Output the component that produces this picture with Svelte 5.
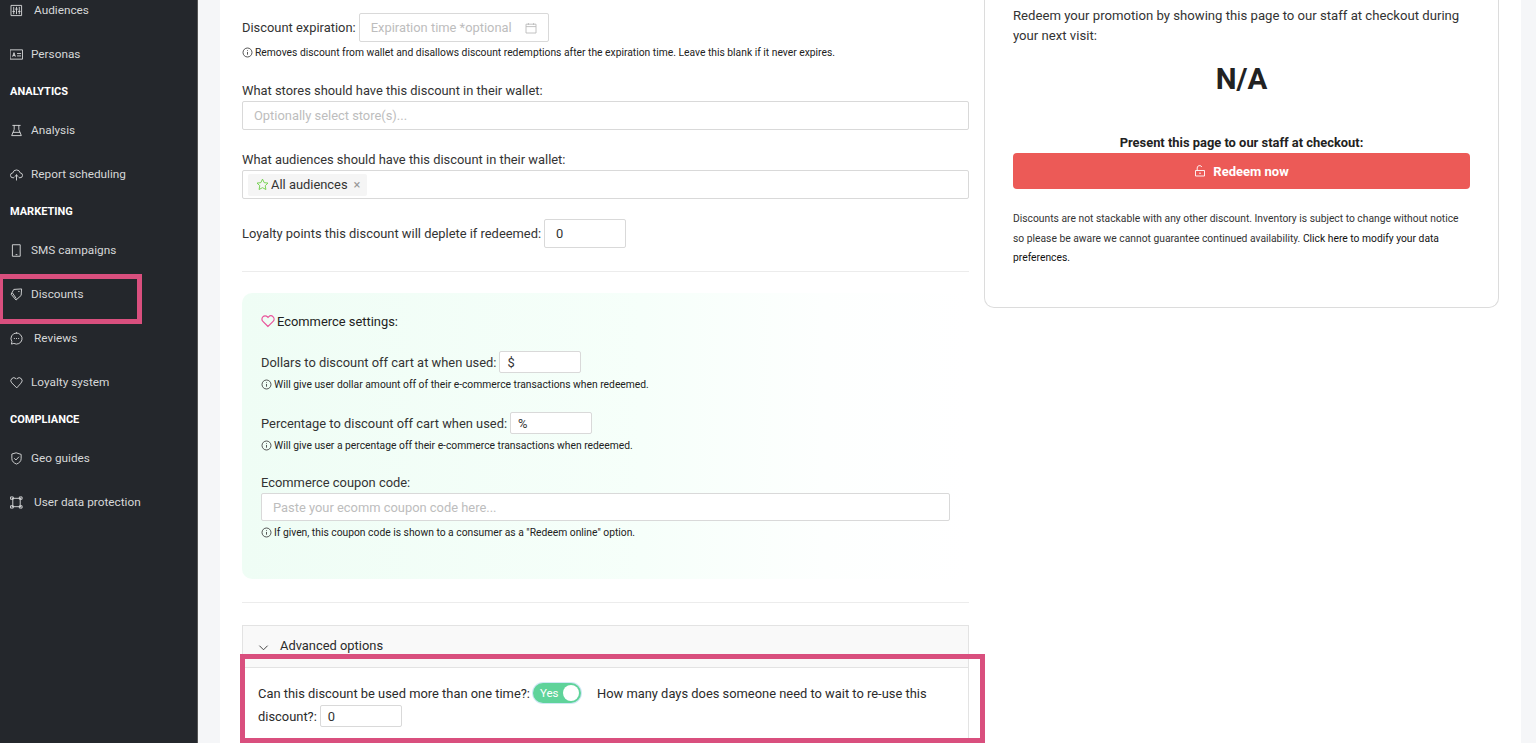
<script>
	const nav = [
		{ icon: 'sliders', label: 'Audiences', wide: true },
		{ icon: 'card', label: 'Personas' },
		{ head: 'ANALYTICS' },
		{ icon: 'flask', label: 'Analysis' },
		{ icon: 'cloud', label: 'Report scheduling' },
		{ head: 'MARKETING' },
		{ icon: 'phone', label: 'SMS campaigns' },
		{ icon: 'tag', label: 'Discounts' },
		{ icon: 'chat', label: 'Reviews', wide: true },
		{ icon: 'heart', label: 'Loyalty system' },
		{ head: 'COMPLIANCE' },
		{ icon: 'shield', label: 'Geo guides' },
		{ icon: 'frame', label: 'User data protection', wide: true }
	];

	const paths = {
		sliders: 'M1.5 1.5h11v11h-11z M4 3.5v7 M7 3.5v7 M10 3.5v7 M3 8h2 M6 5.5h2 M9 8h2',
		card: 'M.5 2h13v10H.5z M3 9l1.3-4 1.3 4 M3.5 8h1.6 M8 6h3.5 M8 8.5h3.5',
		flask: 'M3 1.5h8 M4.5 1.5v4.5L1.8 12.5h10.4L9.5 6V1.5 M3.4 9h7.2',
		cloud: 'M4 10.5H3.2a2.6 2.6 0 0 1-.2-5.2 4.1 4.1 0 0 1 8 0 2.6 2.6 0 0 1-.2 5.2H10 M7 13V7.5 M5.2 9.2 7 7.5l1.8 1.7',
		phone: 'M3 .8h8v12.4H3z M6.5 11.4h1',
		tag: 'M4.5 1.5 12.5 1l-.5 7-5.5 5L1.5 7z M9.3 3.8h.5 M2.8 5.6 6.5 11',
		chat: 'M7 1a6 6 0 1 1-2.8 11.3L1.5 13l.6-2.6A6 6 0 0 1 7 1z M4.6 7h.2 M6.9 7h.2 M9.2 7h.2',
		heart: 'M7 12.5 1.9 7.4a3.2 3.2 0 0 1 4.5-4.6l.6.6.6-.6a3.2 3.2 0 0 1 4.5 4.6z',
		shield: 'M7 1l5 1.6v4.6c0 2.8-2 4.6-5 5.8-3-1.2-5-3-5-5.8V2.6z M4.8 7 6.4 8.6 9.4 5.4',
		frame: 'M2.5 2.5h9 M2.5 11.5h9 M3 2.5v9 M11 2.5v9 M1 1h2.5v2.5H1z M10.5 1H13v2.5h-2.5z M1 10.5h2.5V13H1z M10.5 10.5H13V13h-2.5z'
	};
</script>

{#snippet info()}
	<svg class="info" viewBox="0 0 12 12" aria-hidden="true">
		<circle cx="6" cy="6" r="4.9" />
		<path d="M6 5.4v3 M6 3.5v.8" />
	</svg>
{/snippet}

<div class="page">
	<aside class="sidebar">
		{#each nav as item}
			{#if item.head}
				<div class="nav-head">{item.head}</div>
			{:else}
				<div class="nav-item" class:wide={item.wide}>
					<svg viewBox="0 0 14 14" aria-hidden="true"><path d={paths[item.icon]} /></svg>
					<span>{item.label}</span>
				</div>
			{/if}
		{/each}
	</aside>

	<main class="content">
		<div class="panel">
			<section class="form">
				<div class="row first">
					<span class="label">Discount expiration:</span>
					<div class="input date">
						<span class="ph">Expiration time *optional</span>
						<svg viewBox="0 0 12 12" aria-hidden="true">
							<path d="M1 2.2h10v8.8H1z M1 4.6h10 M3.4 1v2 M8.6 1v2" />
						</svg>
					</div>
				</div>
				<p class="help">{@render info()}Removes discount from wallet and disallows discount redemptions after the expiration time. Leave this blank if it never expires.</p>

				<div class="label stores">What stores should have this discount in their wallet:</div>
				<div class="input full"><span class="ph">Optionally select store(s)...</span></div>

				<div class="label auds">What audiences should have this discount in their wallet:</div>
				<div class="input full tags">
					<span class="tag">
						<svg viewBox="0 0 14 14" aria-hidden="true"><path d="M7 1.2 8.8 5l4.1.5-3 2.8.8 4.1L7 10.4l-3.7 2 .8-4.1-3-2.8L5.2 5z" /></svg>
						All audiences
						<i>×</i>
					</span>
				</div>

				<div class="row loyalty">
					<span class="label">Loyalty points this discount will deplete if redeemed:</span>
					<div class="input small">0</div>
				</div>

				<hr class="rule-one" />

				<div class="green">
					<div class="green-title">
						<svg viewBox="0 0 14 14" aria-hidden="true"><path d="M7 12.5 1.9 7.4a3.2 3.2 0 0 1 4.5-4.6l.6.6.6-.6a3.2 3.2 0 0 1 4.5 4.6z" /></svg>
						Ecommerce settings:
					</div>
					<div class="row dollars">
						<span class="label">Dollars to discount off cart at when used:</span>
						<div class="input small thin">$</div>
					</div>
					<p class="help tight">{@render info()}Will give user dollar amount off of their e-commerce transactions when redeemed.</p>
					<div class="row percent">
						<span class="label">Percentage to discount off cart when used:</span>
						<div class="input small thin">%</div>
					</div>
					<p class="help tight">{@render info()}Will give user a percentage off their e-commerce transactions when redeemed.</p>
					<div class="label coupon">Ecommerce coupon code:</div>
					<div class="input full short"><span class="ph">Paste your ecomm coupon code here...</span></div>
					<p class="help tight">{@render info()}If given, this coupon code is shown to a consumer as a "Redeem online" option.</p>
				</div>

				<hr class="rule-two" />

				<div class="collapse">
					<div class="collapse-head">
						<svg viewBox="0 0 12 12" aria-hidden="true"><path d="M1.5 4 6 8.5 10.5 4" /></svg>
						Advanced options
					</div>
					<div class="collapse-body">
						<div class="body-line">
							<span>Can this discount be used more than one time?:</span>
							<span class="toggle"><b>Yes</b><i></i></span>
							<span class="after-toggle">How many days does someone need to wait to re-use this</span>
						</div>
						<div class="body-line second">
							<span>discount?:</span>
							<div class="input small thin">0</div>
						</div>
					</div>
				</div>
			</section>

			<section class="promo">
				<p class="promo-lead">Redeem your promotion by showing this page to our staff at checkout during your next visit:</p>
				<div class="code">N/A</div>
				<div class="present">Present this page to our staff at checkout:</div>
				<div class="redeem">
					<svg viewBox="0 0 12 12" aria-hidden="true"><path d="M1.5 5.5h9v5.5h-9z M3.2 5.5V3a2.4 2.4 0 0 1 4.6-1 M5 8.2h2" /></svg>
					Redeem now
				</div>
				<p class="fine">Discounts are not stackable with any other discount. Inventory is subject to change without notice<br />so please be aware we cannot guarantee continued availability. <span>Click here to modify your data<br />preferences.</span></p>
			</section>
		</div>
	</main>

	<div class="mark mark-nav"></div>
	<div class="mark mark-form"></div>
</div>

<style>
	:global(body) {
		margin: 0;
		background: #f5f6f8;
	}

	.page {
		position: relative;
		display: flex;
		width: 1536px;
		height: 743px;
		overflow: hidden;
		font-family: Roboto, "Liberation Sans", sans-serif;
		color: #2b2b2b;
	}

	/* sidebar */
	.sidebar {
		flex: 0 0 198px;
		box-sizing: border-box;
		padding: 0 0 0 10px;
		background: #24272c;
		border-right: 1px solid #555;
		color: #d6d7d8;
		font-size: 11.8px;
	}
	.nav-item {
		display: flex;
		align-items: center;
		gap: 8px;
		height: 44px;
	}
	.nav-item:first-child {
		margin-top: -12px;
	}
	.nav-item.wide {
		gap: 11px;
	}
	.nav-item svg {
		width: 13px;
		height: 13px;
		flex: none;
		fill: none;
		stroke: #d6d7d8;
		stroke-width: 1;
		stroke-linecap: round;
	}
	.nav-head {
		height: 32px;
		line-height: 31px;
		font-size: 11px;
		font-weight: 700;
		color: #fff;
	}

	/* main area */
	.content {
		flex: 1;
		padding: 0 15px 0 22px;
		min-width: 0;
	}
	.panel {
		display: flex;
		height: 743px;
		padding: 0 22px;
		background: #fff;
		gap: 15px;
	}
	.form {
		flex: 0 0 727px;
		min-width: 0;
		font-size: 12.9px;
	}
	.promo {
		box-sizing: border-box;
		flex: 0 0 515px;
		min-width: 0;
		height: 308px;
		padding: 6px 28px 0;
		border: 1px solid #dcdcdc;
		border-top: 0;
		border-radius: 0 0 10px 10px;
		font-size: 13.15px;
	}

	.row {
		display: flex;
		align-items: center;
		gap: 3px;
	}
	.row.first {
		padding-top: 13px;
	}
	.label {
		color: #333;
		white-space: nowrap;
	}
	.input {
		box-sizing: border-box;
		display: flex;
		align-items: center;
		height: 29px;
		padding: 0 11px;
		background: #fff;
		border: 1px solid #d9d9d9;
		border-radius: 2px;
		color: #333;
	}
	.ph {
		color: #bdbdbd;
	}
	.date {
		justify-content: space-between;
		width: 190px;
	}
	.date svg {
		width: 12px;
		height: 12px;
		fill: none;
		stroke: #bbb;
		stroke-width: 0.9;
	}
	.full {
		width: 100%;
	}
	.small {
		width: 82px;
	}
	.thin {
		height: 22px;
		padding: 0 7px;
	}
	.short {
		height: 28px;
	}

	.help {
		display: flex;
		align-items: center;
		gap: 2px;
		margin: 3px 0 0;
		height: 14px;
		font-size: 10.3px;
		color: #222;
		white-space: nowrap;
	}
	.info {
		width: 11px;
		height: 11px;
		flex: none;
		fill: none;
		stroke: #333;
		stroke-width: 0.9;
	}

	.stores {
		margin-top: 22px;
		height: 20px;
		line-height: 20px;
	}
	.auds {
		margin-top: 20px;
		height: 20px;
		line-height: 20px;
	}
	.tags {
		padding: 0 5px;
	}
	.tag {
		display: flex;
		align-items: center;
		gap: 2px;
		height: 22px;
		padding: 0 4px 1px 8px;
		box-sizing: border-box;
		background: #f5f5f5;
		border-radius: 2px;
		white-space: nowrap;
	}
	.tag svg {
		width: 13px;
		height: 13px;
		fill: none;
		stroke: #6fcf4a;
		stroke-width: 1;
	}
	.tag i {
		font-style: normal;
		color: #999;
		margin: 0 3px 0 4px;
	}
	.loyalty {
		margin-top: 20px;
	}

	hr {
		margin: 0;
		border: 0;
		border-top: 1px solid #ececec;
	}
	.rule-one {
		margin-top: 23px;
	}

	.green {
		box-sizing: border-box;
		height: 286px;
		margin-top: 21px;
		padding: 19px 19px 0;
		border-radius: 10px;
		background: linear-gradient(90deg, #effdf5 0%, #f6fffa 55%, #fdfffe 80%, #ffffff 100%);
	}
	.green-title {
		display: flex;
		align-items: center;
		gap: 2px;
		height: 18px;
		color: #222;
	}
	.green-title svg {
		width: 14px;
		height: 14px;
		fill: none;
		stroke: #e9559b;
		stroke-width: 1.2;
	}
	.dollars {
		margin-top: 21px;
	}
	.percent {
		margin-top: 21px;
	}
	.coupon {
		margin-top: 21px;
		height: 20px;
		line-height: 20px;
	}
	.tight {
		margin-top: 4px;
	}

	.rule-two {
		margin-top: 23px;
	}
	.collapse {
		margin-top: 22px;
		border: 1px solid #e3e3e3;
		border-bottom: 0;
	}
	.collapse-head {
		display: flex;
		align-items: center;
		gap: 11px;
		box-sizing: border-box;
		height: 42px;
		padding: 0 0 2px 15px;
		background: #f9f9f9;
		border-bottom: 1px solid #e3e3e3;
	}
	.collapse-head svg {
		width: 11px;
		height: 11px;
		fill: none;
		stroke: #333;
		stroke-width: 1;
		margin-top: 4px;
	}
	.collapse-body {
		padding: 15px 15px 0;
		height: 76px;
		box-sizing: border-box;
	}
	.body-line {
		display: flex;
		align-items: center;
		height: 20px;
		white-space: nowrap;
	}
	.body-line.second {
		gap: 3px;
		height: 22px;
		margin-top: 2px;
	}
	.toggle {
		display: flex;
		align-items: center;
		justify-content: space-between;
		box-sizing: border-box;
		width: 48px;
		height: 20px;
		margin-left: 3px;
		padding: 0 2px 0 7px;
		background: #5fd39a;
		border-radius: 10px;
		box-shadow: 0 0 0 1px #cfe8f5;
		color: #fff;
		font-size: 11.5px;
	}
	.toggle b {
		font-weight: 400;
	}
	.toggle i {
		width: 16px;
		height: 16px;
		background: #fff;
		border-radius: 50%;
	}
	.after-toggle {
		margin-left: 16px;
	}

	/* redeem card */
	.promo-lead {
		margin: 0;
		line-height: 19.6px;
		color: #333;
	}
	.code {
		margin-top: 15px;
		text-align: center;
		font-size: 29.5px;
		font-weight: 700;
		line-height: 38px;
		color: #222;
	}
	.present {
		margin-top: 35px;
		text-align: center;
		font-weight: 700;
		line-height: 20px;
		font-size: 12.9px;
		color: #222;
	}
	.redeem {
		display: flex;
		align-items: center;
		justify-content: center;
		gap: 7px;
		height: 36px;
		background: #ec5a57;
		border-radius: 4px;
		color: #fff;
		font-weight: 700;
		font-size: 13px;
	}
	.redeem svg {
		width: 12px;
		height: 12px;
		fill: none;
		stroke: #fff;
		stroke-width: 0.9;
	}
	.fine {
		margin: 20px 0 0;
		font-size: 10.3px;
		line-height: 19.6px;
		color: #333;
		white-space: nowrap;
	}
	.fine span {
		color: #111;
	}

	/* pink annotation boxes over the screenshot */
	.mark {
		position: absolute;
		box-sizing: border-box;
		border: 5px solid #d94f7e;
		pointer-events: none;
	}
	.mark-nav {
		left: -2px;
		top: 274px;
		width: 144px;
		height: 50px;
	}
	.mark-form {
		left: 240px;
		top: 654px;
		width: 745px;
		height: 89px;
	}
</style>
